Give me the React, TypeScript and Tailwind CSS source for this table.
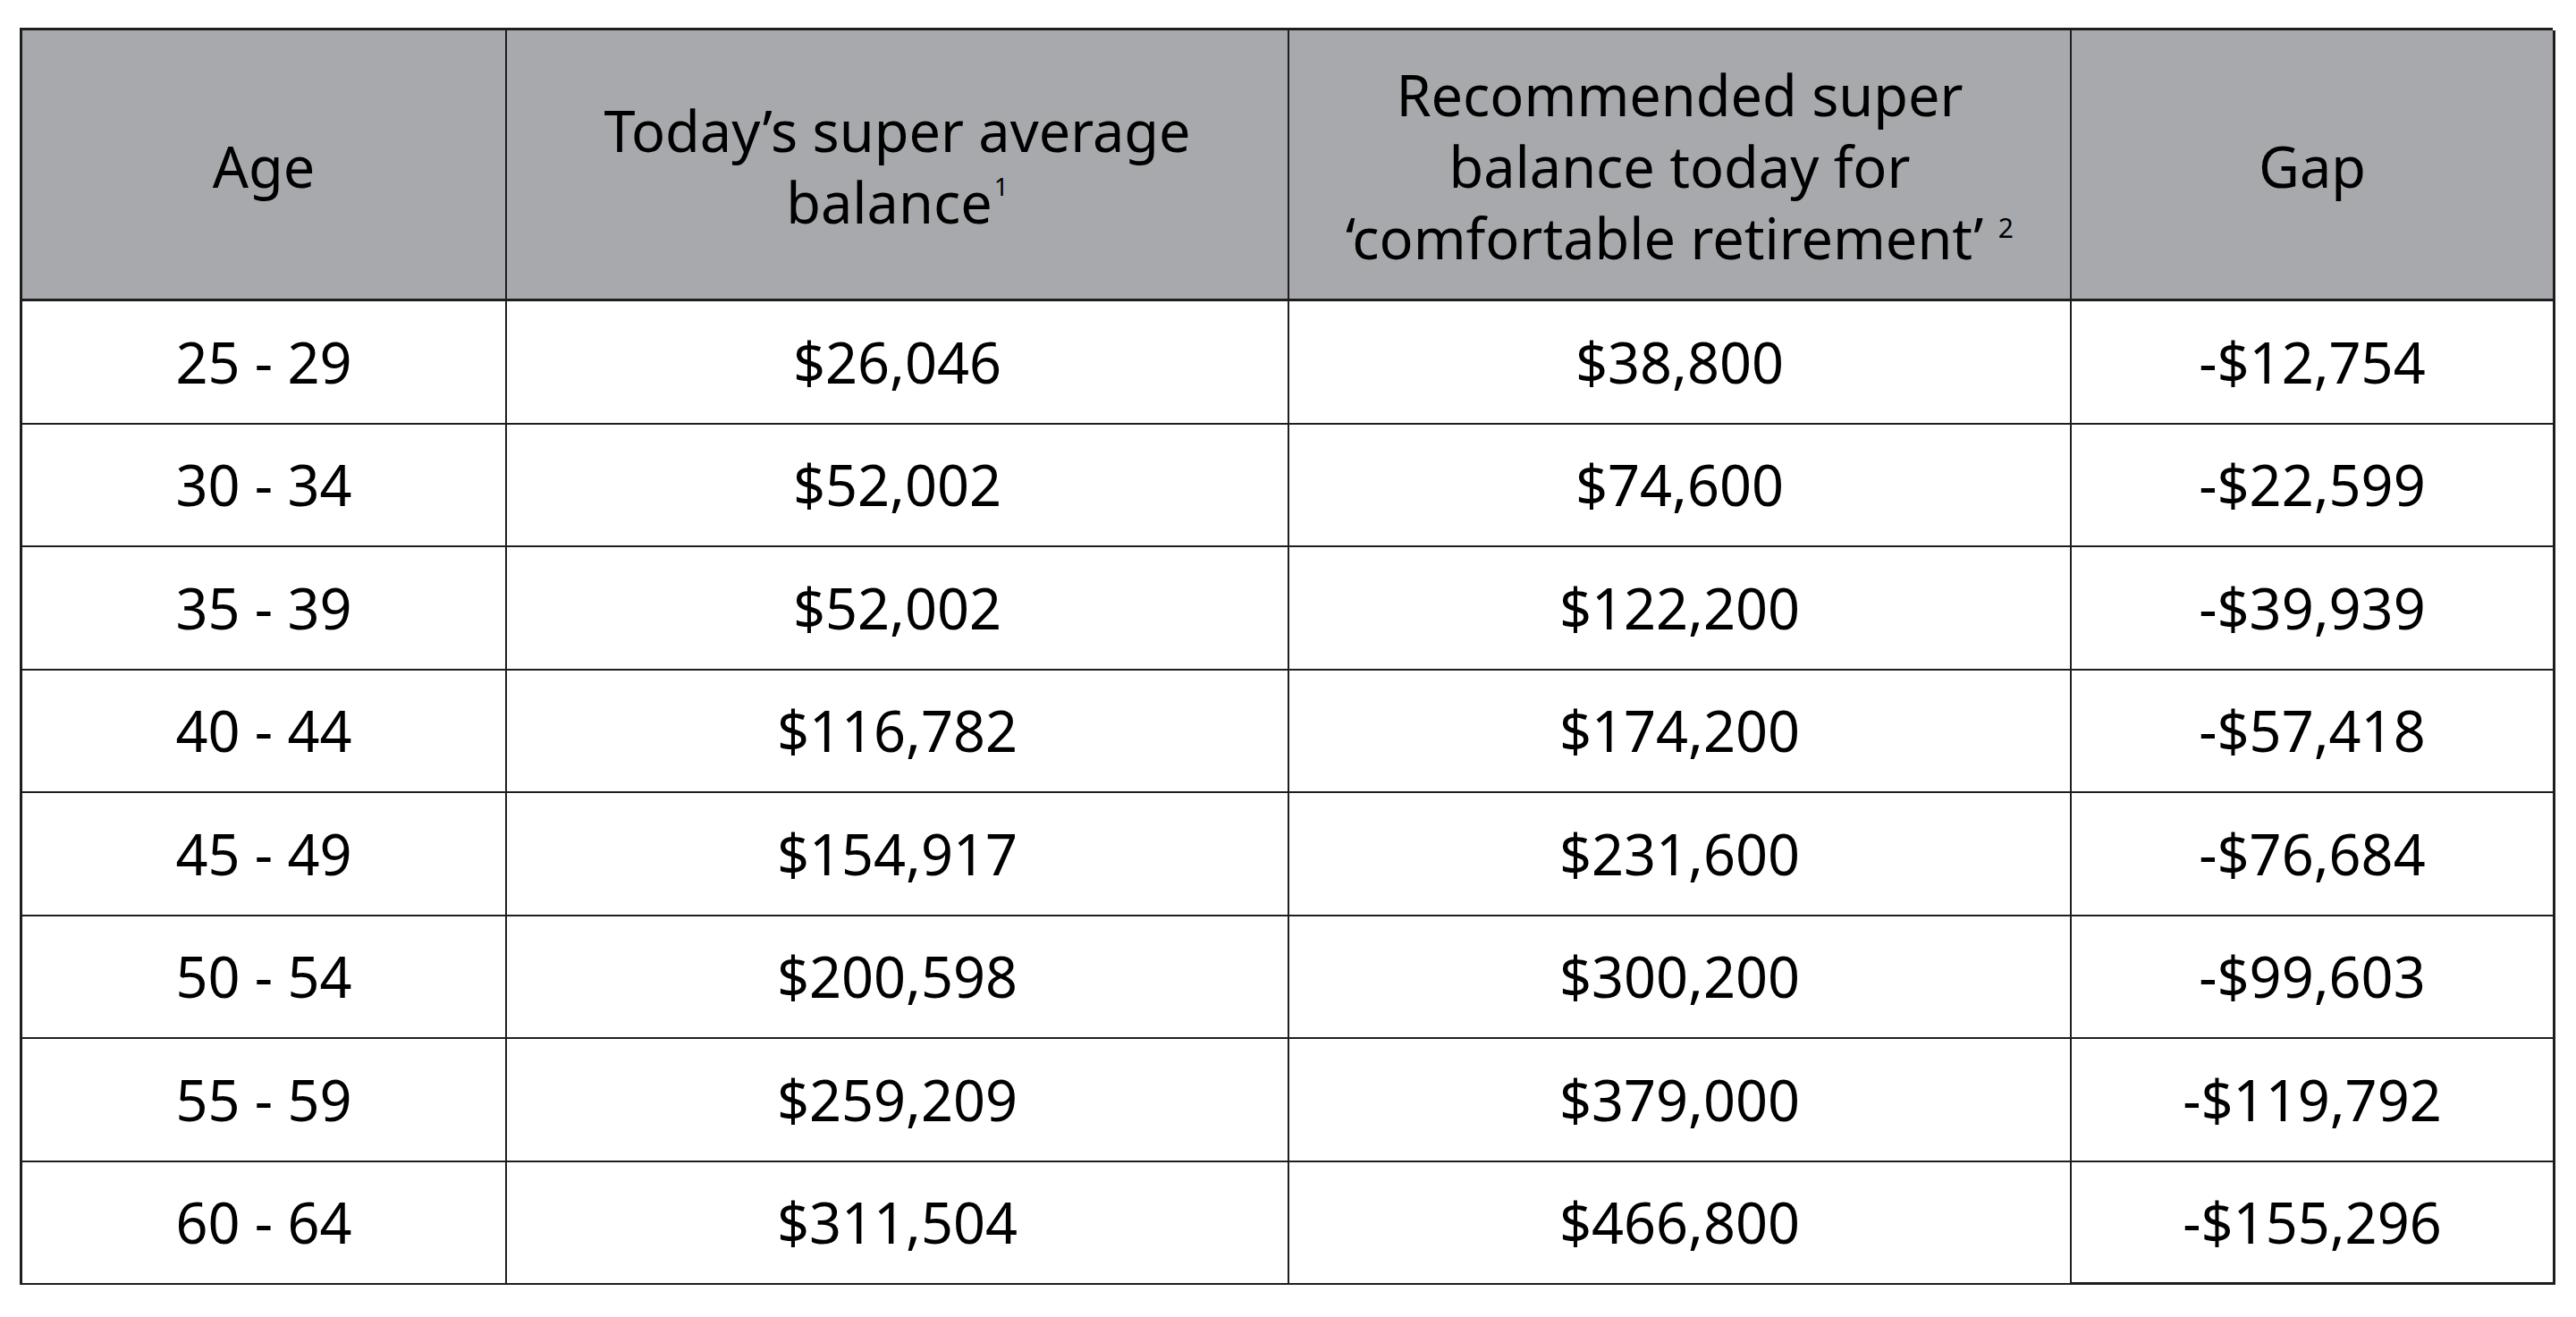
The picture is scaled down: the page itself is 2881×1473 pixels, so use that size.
const ROWS = [
  ["25 - 29", "$26,046", "$38,800", "-$12,754"],
  ["30 - 34", "$52,002", "$74,600", "-$22,599"],
  ["35 - 39", "$52,002", "$122,200", "-$39,939"],
  ["40 - 44", "$116,782", "$174,200", "-$57,418"],
  ["45 - 49", "$154,917", "$231,600", "-$76,684"],
  ["50 - 54", "$200,598", "$300,200", "-$99,603"],
  ["55 - 59", "$259,209", "$379,000", "-$119,792"],
  ["60 - 64", "$311,504", "$466,800", "-$155,296"],
];

const headCell =
  "flex items-center justify-center text-center bg-[#a8a9ad] border-r-2 border-b-[3px] border-[#1e1e1e] px-6 leading-[80px] pt-[4px]";
const cell =
  "flex items-center justify-center border-r-2 border-b-2 border-[#1e1e1e] h-[137.5px]";

export default function App() {
  return (
    <div className="w-[2881px] h-[1473px] bg-white pl-[22px] pt-[31px] font-['Noto_Sans',sans-serif] text-black">
      <div className="grid grid-cols-[542px_875px_875px_541px] w-[2833px] border-l-[3px] border-t-[3px] border-[#1e1e1e] text-[63px]">
        {/* header */}
        <div className={`${headCell} h-[303px]`}>Age</div>
        <div className={`${headCell} h-[303px]`}>
          <span>
            Today’s super average
            <br />
            balance<sup className="text-[28px] leading-none align-[17px] ml-[2px]">1</sup>
          </span>
        </div>
        <div className={`${headCell} h-[303px]`}>
          <span>
            Recommended super
            <br />
            balance today for
            <br />
            ‘comfortable retirement’ <sup className="text-[30px] leading-none align-[9px]">2</sup>
          </span>
        </div>
        <div className={`${headCell} h-[303px] border-r-[3px]`}>Gap</div>

        {/* rows */}
        {ROWS.map((r, i) => (
          <div key={i} className="contents">
            <div className={cell}>{r[0]}</div>
            <div className={cell}>{r[1]}</div>
            <div className={cell}>{r[2]}</div>
            <div className={`${cell} border-r-[3px] ${i === ROWS.length - 1 ? "border-b-[3px]" : ""}`}>{r[3]}</div>
          </div>
        ))}
      </div>
    </div>
  );
}
